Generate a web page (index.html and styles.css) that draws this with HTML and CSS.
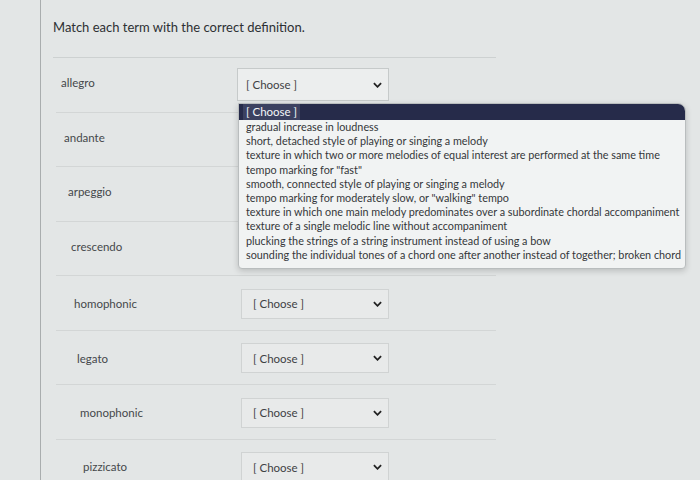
FILE: index.html
```html
<!DOCTYPE html>
<html>
<head>
<meta charset="utf-8">
<link rel="stylesheet" href="styles.css">
</head>
<body>
<div class="page">
  <div class="sheet">
    <h1 class="title">Match each term with the correct definition.</h1>
    <div class="rows">
      <div class="row"><span class="term">allegro</span><div class="select active"><span>[ Choose ]</span><svg class="chev" viewBox="0 0 10 6" width="9" height="6"><path d="M1 1 L5 5 L9 1" fill="none" stroke="#222" stroke-width="2"/></svg></div></div>
      <div class="row"><span class="term">andante</span><div class="select covered"><span>[ Choose ]</span><svg class="chev" viewBox="0 0 10 6" width="9" height="6"><path d="M1 1 L5 5 L9 1" fill="none" stroke="#222" stroke-width="2"/></svg></div></div>
      <div class="row"><span class="term">arpeggio</span><div class="select covered"><span>[ Choose ]</span><svg class="chev" viewBox="0 0 10 6" width="9" height="6"><path d="M1 1 L5 5 L9 1" fill="none" stroke="#222" stroke-width="2"/></svg></div></div>
      <div class="row"><span class="term">crescendo</span><div class="select covered"><span>[ Choose ]</span><svg class="chev" viewBox="0 0 10 6" width="9" height="6"><path d="M1 1 L5 5 L9 1" fill="none" stroke="#222" stroke-width="2"/></svg></div></div>
      <div class="row"><span class="term">homophonic</span><div class="select"><span>[ Choose ]</span><svg class="chev" viewBox="0 0 10 6" width="9" height="6"><path d="M1 1 L5 5 L9 1" fill="none" stroke="#222" stroke-width="2"/></svg></div></div>
      <div class="row"><span class="term">legato</span><div class="select"><span>[ Choose ]</span><svg class="chev" viewBox="0 0 10 6" width="9" height="6"><path d="M1 1 L5 5 L9 1" fill="none" stroke="#222" stroke-width="2"/></svg></div></div>
      <div class="row"><span class="term">monophonic</span><div class="select"><span>[ Choose ]</span><svg class="chev" viewBox="0 0 10 6" width="9" height="6"><path d="M1 1 L5 5 L9 1" fill="none" stroke="#222" stroke-width="2"/></svg></div></div>
      <div class="row"><span class="term">pizzicato</span><div class="select"><span>[ Choose ]</span><svg class="chev" viewBox="0 0 10 6" width="9" height="6"><path d="M1 1 L5 5 L9 1" fill="none" stroke="#222" stroke-width="2"/></svg></div></div>
    </div>
    <ul class="menu">
      <li class="opt selected"><span class="sel-label">[ Choose ]</span></li>
      <li class="opt">gradual increase in loudness</li>
      <li class="opt">short, detached style of playing or singing a melody</li>
      <li class="opt">texture in which two or more melodies of equal interest are performed at the same time</li>
      <li class="opt">tempo marking for "fast"</li>
      <li class="opt">smooth, connected style of playing or singing a melody</li>
      <li class="opt">tempo marking for moderately slow, or "walking" tempo</li>
      <li class="opt">texture in which one main melody predominates over a subordinate chordal accompaniment</li>
      <li class="opt">texture of a single melodic line without accompaniment</li>
      <li class="opt">plucking the strings of a string instrument instead of using a bow</li>
      <li class="opt">sounding the individual tones of a chord one after another instead of together; broken chord</li>
    </ul>
  </div>
</div>
</body>
</html>
```
FILE: styles.css
```css
html, body {
  margin: 0;
  padding: 0;
  background: #e3e6e6;
}
.page {
  width: 700px;
  height: 480px;
  overflow: hidden;
  font-family: Lato, "Open Sans", sans-serif;
  color: #3a3d40;
}
.sheet {
  position: relative;
  margin-left: 40px;
  height: 480px;
  border-left: 1px solid #a9adae;
  padding-left: 15px;
  width: 440px;
}
.title {
  margin: 0;
  padding-top: 19px;
  height: 58px;
  box-sizing: border-box;
  font-size: 13px;
  font-weight: 400;
  color: #2d3033;
  margin-left: -3px;
  border-bottom: 1px solid #cdd1d1;
}
.rows {
  display: flex;
  flex-direction: column;
}
.row {
  height: 54.5px;
  display: flex;
  align-items: center;
  border-bottom: 1px solid #d3d6d6;
  box-sizing: border-box;
}
.term {
  width: 180px;
  box-sizing: border-box;
  padding-left: 5px;
  font-size: 11.5px;
  color: #45484b;
  margin-top: -4px;
}
.row:nth-child(2) .term { padding-left: 8px; }
.row:nth-child(3) .term { padding-left: 12px; }
.row:nth-child(4) .term { padding-left: 15px; }
.row:nth-child(5) .term { padding-left: 18px; margin-top: 2px; }
.row:nth-child(6) .term { padding-left: 21px; margin-top: 2px; }
.row:nth-child(7) .term { padding-left: 24px; margin-top: 2px; }
.row:nth-child(8) .term { padding-left: 27px; margin-top: 0; }
.select {
  width: 152px;
  height: 30px;
  box-sizing: border-box;
  border: 1px solid #d0d3d3;
  background: #e8eaea;
  display: flex;
  align-items: center;
  justify-content: space-between;
  padding: 0 6px 0 11px;
  font-size: 11.5px;
  color: #3e4144;
  margin-left: 1px;
  margin-top: 2px;
}
.select.covered { visibility: hidden; }
.row:nth-child(n+5) .select { margin-left: 5px; width: 148px; }
.select.active {
  border-color: #c6caca;
  background: #eceeee;
  margin-top: 0;
  height: 33px;
  padding-left: 8px;
}
.chev { display: block; }
.menu {
  position: absolute;
  left: 197px;
  top: 103px;
  width: 448px;
  margin: 0;
  padding: 0 0 6px 0;
  list-style: none;
  background: #f1f3f3;
  border: 1px solid #b9bdbe;
  border-radius: 0 8px 4px 4px;
  box-shadow: 0 2px 6px rgba(0,0,0,0.18);
  font-size: 10.8px;
  line-height: 14.2px;
  color: #34373a;
  box-sizing: border-box;
  height: 166px;
}
.opt {
  padding-left: 7px;
  white-space: nowrap;
}
.opt.selected {
  background: #262b4a;
  border-radius: 0 7px 0 0;
  height: 16px;
  padding-left: 4px;
  line-height: 16px;
}
.sel-label {
  display: inline-block;
  background: #3b4160;
  color: #f4f5f8;
  padding: 0 3px;
  font-size: 11.5px;
}
```
